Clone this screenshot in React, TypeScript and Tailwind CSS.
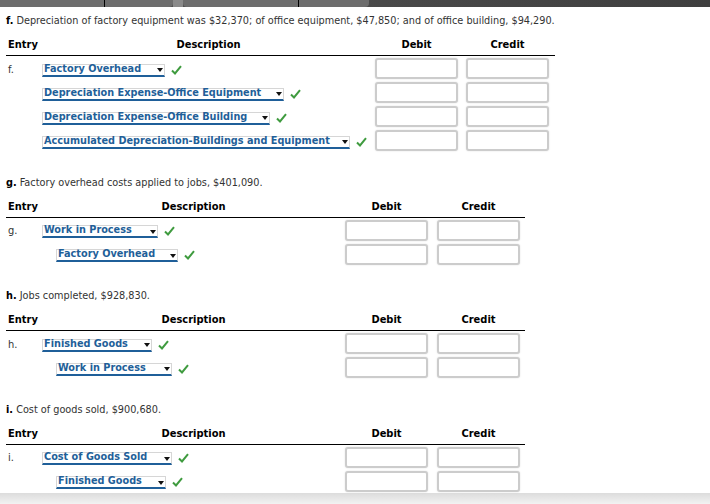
import React from "react";

type Line = { label: string; width: number; indent?: boolean };

type Section = {
  letter: string;
  text: string;
  cols: string;
  lines: Line[];
};

const sections: Section[] = [
  {
    letter: "f.",
    text: "Depreciation of factory equipment was $32,370; of office equipment, $47,850; and of office building, $94,290.",
    cols: "w-[549px] grid-cols-[36px_333px_91px_89px]",
    lines: [
      { label: "Factory Overhead", width: 123 },
      { label: "Depreciation Expense-Office Equipment", width: 242 },
      { label: "Depreciation Expense-Office Building", width: 228 },
      { label: "Accumulated Depreciation-Buildings and Equipment", width: 308 },
    ],
  },
  {
    letter: "g.",
    text: "Factory overhead costs applied to jobs, $401,090.",
    cols: "w-[519px] grid-cols-[36px_303px_92px_88px]",
    lines: [
      { label: "Work in Process", width: 116 },
      { label: "Factory Overhead", width: 122, indent: true },
    ],
  },
  {
    letter: "h.",
    text: "Jobs completed, $928,830.",
    cols: "w-[519px] grid-cols-[36px_303px_92px_88px]",
    lines: [
      { label: "Finished Goods", width: 110 },
      { label: "Work in Process", width: 116, indent: true },
    ],
  },
  {
    letter: "i.",
    text: "Cost of goods sold, $900,680.",
    cols: "w-[519px] grid-cols-[36px_303px_92px_88px]",
    lines: [
      { label: "Cost of Goods Sold", width: 130 },
      { label: "Finished Goods", width: 110, indent: true },
    ],
  },
];

const Check = () => (
  <svg width="11" height="10" viewBox="0 0 11 10" className="mb-[1px] shrink-0">
    <path d="M1 5.5 L4 8.5 L10 1.2" fill="none" stroke="#3f9b3f" strokeWidth="2" />
  </svg>
);

const Dropdown = ({ line }: { line: Line }) => (
  <div className={`mt-[4px] flex items-center gap-[6px] ${line.indent ? "pl-[14px]" : ""}`}>
    <div
      className="relative flex h-[13px] items-end border-t border-l border-r border-[#d6d6d6] border-b-2 border-b-[#1f5f99] bg-white"
      style={{ width: line.width }}
    >
      <span className="pl-[1px] text-[10.8px] font-bold leading-[12px] text-[#1f5f99] whitespace-nowrap">
        {line.label}
      </span>
      <span className="absolute right-[1px] top-[2px] flex h-[7px] w-[7px] items-center justify-center">
        <svg width="6" height="4" viewBox="0 0 6 4">
          <path d="M0 0 H6 L3 4 Z" fill="#111" />
        </svg>
      </span>
    </div>
    <Check />
  </div>
);

const Box = () => (
  <div className="mt-[1px] h-[21px] w-[83px] rounded-[3px] border-2 border-[#cccccc] bg-white shadow-[0_0_2px_rgba(0,0,0,0.12)]" />
);

const EntryTable = ({ s }: { s: Section }) => (
  <div>
    <p className="h-[14px] text-[10.8px] leading-[14px] text-[#333] whitespace-nowrap">
      <span className="font-bold text-black">{s.letter}</span> {s.text}
    </p>
    <div className={`mt-[10px] grid ${s.cols} border-b border-black pb-[3px] text-[11px] font-bold leading-[14px] text-black`}>
      <span className="pl-[2px]">Entry</span>
      <span className="text-center">Description</span>
      <span className="w-[83px] text-center">Debit</span>
      <span className="w-[83px] text-center">Credit</span>
    </div>
    {s.lines.map((line, i) => (
      <div key={i} className={`grid ${s.cols} h-[24px] items-center`}>
        <span className="mt-[3px] pl-[2px] text-[11px] leading-[14px] text-[#333]">{i === 0 ? s.letter : ""}</span>
        <Dropdown line={line} />
        <Box />
        <Box />
      </div>
    ))}
  </div>
);

export default function App() {
  return (
    <div className="h-[504px] w-[710px] overflow-hidden bg-white font-['DejaVu_Sans_Condensed','DejaVu_Sans',sans-serif]">
      <div className="flex h-[7px] bg-gradient-to-r from-[#555] to-[#3f3f3f]">
        <div className="flex h-full w-[173px] rounded-br-[4px] bg-[#6d6d6d]">
          <div className="w-[105px] border-r border-black" />
        </div>
        <div className="w-[10px] bg-[#8a8a8a]" />
        <div className="flex h-full w-[186px] rounded-b-[4px] bg-[#6d6d6d]">
          <div className="w-[116px] border-r border-black" />
        </div>
      </div>
      <div className="flex flex-col gap-[23.5px] px-[6px] pt-[7px]">
        {sections.map((s) => (
          <EntryTable key={s.letter} s={s} />
        ))}
      </div>
      <div className="h-[11px] bg-gradient-to-b from-[#dcdcdc] to-[#f2f2f2]" />
    </div>
  );
}
